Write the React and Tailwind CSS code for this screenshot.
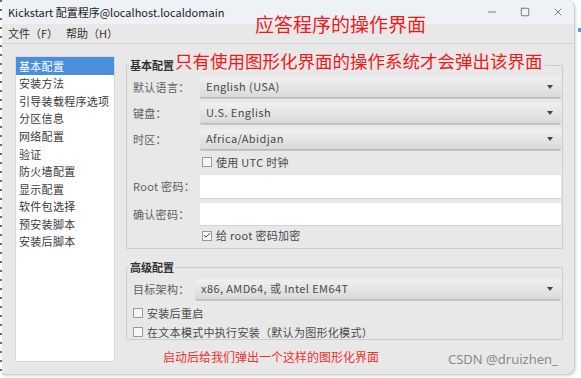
import { Minus, Square, X, Check } from "lucide-react";

const font = { fontFamily: '"Noto Sans CJK SC", "Noto Sans", sans-serif' };

const navItems = [
  "基本配置",
  "安装方法",
  "引导装载程序选项",
  "分区信息",
  "网络配置",
  "验证",
  "防火墙配置",
  "显示配置",
  "软件包选择",
  "预安装脚本",
  "安装后脚本",
];

function Select({ value, className = "" }) {
  return (
    <div
      className={`h-[21px] flex items-center justify-between pl-[6px] pr-[8px] rounded-[2px] bg-gradient-to-b from-[#f0f0f0] to-[#dadada] border-b border-[#b9b9b9] shadow-[0_1px_0_#c8c8c8] ${className}`}
    >
      <span className="text-[11px] text-[#4a4a4a] tracking-[0.4px]">{value}</span>
      <span className="w-0 h-0 border-l-[3px] border-r-[3px] border-t-[4px] border-l-transparent border-r-transparent border-t-[#444]" />
    </div>
  );
}

function CheckBox({ checked, label }) {
  return (
    <div className="flex items-center gap-[4px]">
      <span className="w-[10px] h-[10px] border border-[#9a9a9a] bg-[#f7f7f7] flex items-center justify-center">
        {checked && <Check size={9} strokeWidth={3} className="text-[#333]" />}
      </span>
      <span className="text-[11px] text-[#4a4a4a] tracking-[0.3px]">{label}</span>
    </div>
  );
}

function Row({ label, children, labelW = "w-[67px]" }) {
  return (
    <div className="flex items-center">
      <span className={`${labelW} shrink-0 text-[11px] text-[#606060] tracking-[0.3px]`}>{label}</span>
      <div className="flex-1">{children}</div>
    </div>
  );
}

export default function App() {
  return (
    <div className="w-[581px] h-[378px] bg-white relative overflow-hidden" style={font}>
      {/* background strip left */}
      <div className="absolute left-0 top-0 w-[2px] h-full bg-[repeating-linear-gradient(to_bottom,#6b6b6b_0px,#6b6b6b_2px,#fff_2px,#fff_9px)]" />

      {/* window */}
      <div className="ml-[2px] w-[573px] h-[375px] rounded-tr-[8px] rounded-br-[8px] border-r border-b border-[#cfcfcf] bg-[#e8e8e8] flex flex-col overflow-hidden shadow-[1px_1px_3px_rgba(0,0,0,0.15)]">
        {/* title bar */}
        <div className="h-[24px] bg-[#eef2f7] flex items-center justify-between pl-[6px] pr-[10px] shrink-0">
          <span className="text-[11px] text-[#222]">Kickstart 配置程序@localhost.localdomain</span>
          <div className="flex items-center gap-[22px] text-[#555]">
            <Minus size={12} strokeWidth={1.5} />
            <Square size={10} strokeWidth={1.8} className="rounded-[2px]" />
            <X size={12} strokeWidth={1.5} />
          </div>
        </div>

        {/* menu bar */}
        <div className="h-[20px] flex items-center gap-[8px] pl-[6px] border-b border-[#d6d6d6] shrink-0">
          <span className="text-[11px] text-[#333]">文件（F）</span>
          <span className="text-[11px] text-[#333]">帮助（H）</span>
        </div>

        {/* content */}
        <div className="flex-1 flex pl-[13px] pt-[12px] pr-[11px] pb-[12px] gap-[11px]">
          {/* nav list */}
          <div className="w-[100px] h-[306px] bg-white border border-[#d8d8d8]">
            {navItems.map((item, i) => (
              <div
                key={item}
                className={`h-[17.6px] flex items-center pl-[3px] text-[11px] tracking-[0.3px] ${
                  i === 0 ? "bg-[#4a8fdc] text-white" : "text-[#3a3a3a]"
                }`}
              >
                {item}
              </div>
            ))}
          </div>

          {/* right column */}
          <div className="flex-1 flex flex-col">
            <fieldset className="border border-[#cdcdcd] px-[6px] pr-[1px] pb-[4px] h-[192px] mt-[1px]">
              <legend className="text-[11px] font-bold text-[#333] px-[1px] ml-[-4px]">基本配置</legend>
              <div className="flex flex-col gap-[5px] mt-[3px]">
                <Row label="默认语言：">
                  <Select value="English (USA)" />
                </Row>
                <Row label="键盘：">
                  <Select value="U.S. English" />
                </Row>
                <Row label="时区：">
                  <Select value="Africa/Abidjan" />
                </Row>
              </div>
              <div className="pl-[69px] h-[25px] flex items-center">
                <CheckBox label="使用 UTC 时钟" />
              </div>
              <div className="flex flex-col gap-[4px]">
                <Row label="Root 密码：">
                  <div className="h-[24px] bg-white border-b border-[#d2d2d2]" />
                </Row>
                <Row label="确认密码：">
                  <div className="h-[23px] bg-white border-b border-[#d2d2d2]" />
                </Row>
              </div>
              <div className="pl-[69px] h-[20px] flex items-center">
                <CheckBox checked label="给 root 密码加密" />
              </div>
            </fieldset>

            <fieldset className="border border-[#cdcdcd] px-[6px] pr-[1px] mt-[10px] h-[81px]">
              <legend className="text-[11px] font-bold text-[#333] px-[1px] ml-[-4px]">高级配置</legend>
              <div className="mt-[3px]">
                <Row label="目标架构：" labelW="w-[62px]">
                  <Select value="x86, AMD64, 或 Intel EM64T" />
                </Row>
              </div>
              <div className="flex flex-col gap-[3px] mt-[5px]">
                <CheckBox label="安装后重启" />
                <CheckBox label="在文本模式中执行安装（默认为图形化模式）" />
              </div>
            </fieldset>

            <div className="pl-[37px] mt-[8px] text-[12px] text-[#f0302d]">启动后给我们弹出一个这样的图形化界面</div>
          </div>
        </div>
      </div>

      {/* annotations */}
      <div className="absolute left-[255px] top-[14px] text-[19px] leading-none text-[#f01818]">应答程序的操作界面</div>
      <div className="absolute left-[175px] top-[52px] text-[17.5px] leading-none text-[#f01818] bg-[#e8e8e8] pr-[2px]">
        只有使用图形化界面的操作系统才会弹出该界面
      </div>
      <div className="absolute left-[448px] top-[353px] text-[13px] text-[#8a8a8a] leading-none" style={{ fontFamily: '"Noto Sans", sans-serif' }}>
        CSDN @druizhen_
      </div>
      {/* right edge mark */}
      <div className="absolute left-[578px] top-[28px] w-[3px] h-[4px] bg-[#5b9bd5]" />
    </div>
  );
}
